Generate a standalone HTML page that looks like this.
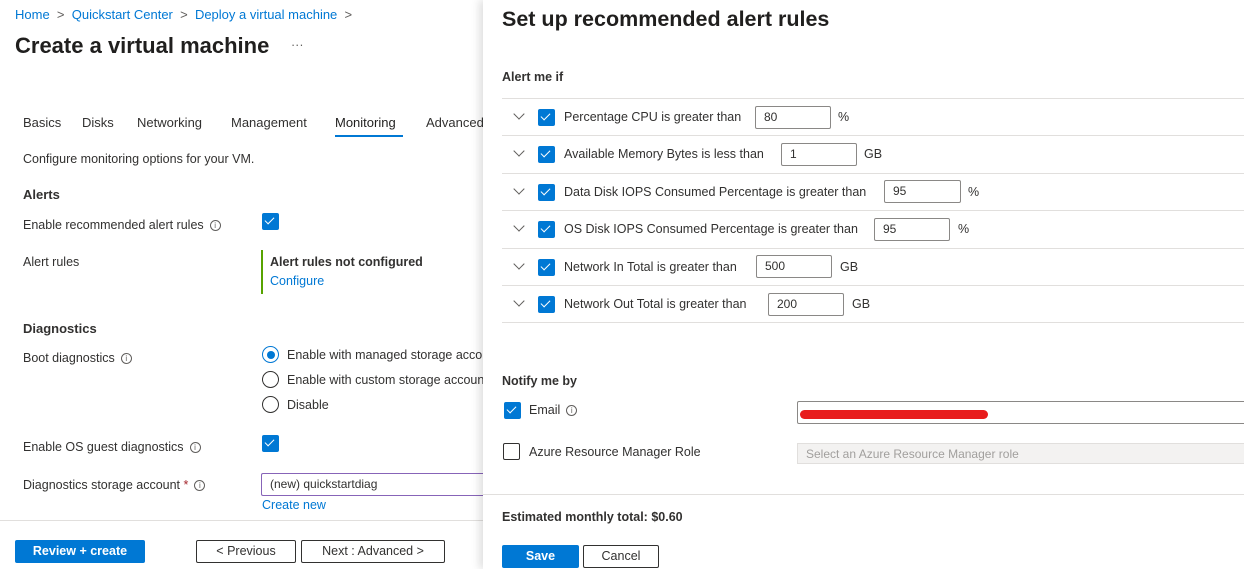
<!DOCTYPE html>
<html><head><meta charset="utf-8"><style>
*{box-sizing:border-box;margin:0;padding:0}
body{width:1244px;height:569px;overflow:hidden;background:#fff;font-family:"Liberation Sans",sans-serif;font-size:12.5px;color:#323130;position:relative}
.a{position:absolute;white-space:nowrap}
.lk{color:#0078d4}
.cb{position:absolute;width:17px;height:17px;background:#0078d4;border-radius:2px}
.cb:after{content:"";position:absolute;left:5px;top:2px;width:4px;height:8px;border:solid #fff;border-width:0 1.3px 1.3px 0;transform:rotate(45deg)}
.info{display:inline-block;width:11px;height:11px;border:1px solid #605e5c;border-radius:50%;font-size:8px;line-height:9px;text-align:center;color:#605e5c;vertical-align:middle;margin-left:6px}
.rd{position:absolute;width:17px;height:17px;border:1px solid #323130;border-radius:50%}
.inp{position:absolute;height:23px;border:1px solid #8a8886;border-radius:2px;padding-left:8px;line-height:21px;font-size:12px}
.hr{position:absolute;left:502px;right:0;height:1px;background:#e1dfdd}
.chev{position:absolute;width:8px;height:8px;border:solid #605e5c;border-width:0 1.2px 1.2px 0;transform:rotate(45deg)}
.btn{position:absolute;height:23px;border:1px solid #323130;border-radius:2px;text-align:center;line-height:21px;font-size:12.5px}
</style></head><body>
<div class="a lk" style="left:15px;top:7px;font-size:13px">Home <span style="color:#605e5c">&nbsp;&gt;&nbsp;</span> Quickstart Center <span style="color:#605e5c">&nbsp;&gt;&nbsp;</span> Deploy a virtual machine <span style="color:#605e5c">&nbsp;&gt;</span></div>
<div class="a" style="left:15px;top:33px;font-size:22px;color:#201f1e;font-weight:600">Create a virtual machine</div>
<div class="a" style="left:291px;top:38px;color:#605e5c">···</div>
<div class="a" style="left:23px;top:115px;font-size:13px">Basics</div>
<div class="a" style="left:82px;top:115px;font-size:13px">Disks</div>
<div class="a" style="left:137px;top:115px;font-size:13px">Networking</div>
<div class="a" style="left:231px;top:115px;font-size:13px">Management</div>
<div class="a" style="left:335px;top:115px;font-size:13px;color:#201f1e">Monitoring</div>
<div class="a" style="left:335px;top:135px;width:68px;height:2px;background:#0078d4"></div>
<div class="a" style="left:426px;top:115px;font-size:13px">Advanced</div>
<div class="a" style="left:23px;top:152px">Configure monitoring options for your VM.</div>
<div class="a" style="left:23px;top:187px;font-weight:700;font-size:13px">Alerts</div>
<div class="a" style="left:23px;top:218px">Enable recommended alert rules<span class="info">i</span></div>
<div class="cb" style="left:262px;top:213px"></div>
<div class="a" style="left:23px;top:255px">Alert rules</div>
<div class="a" style="left:261px;top:250px;width:2px;height:44px;background:#57a300"></div>
<div class="a" style="left:270px;top:255px;font-weight:700">Alert rules not configured</div>
<div class="a lk" style="left:270px;top:274px">Configure</div>
<div class="a" style="left:23px;top:321px;font-weight:700;font-size:13px">Diagnostics</div>
<div class="a" style="left:23px;top:351px">Boot diagnostics<span class="info">i</span></div>
<div class="rd" style="left:262px;top:346px;border-color:#0078d4"><div style="position:absolute;left:3.5px;top:3.5px;width:8px;height:8px;border-radius:50%;background:#0078d4"></div></div>
<div class="a" style="left:287px;top:348px">Enable with managed storage accou</div>
<div class="rd" style="left:262px;top:371px"></div>
<div class="a" style="left:287px;top:373px">Enable with custom storage account</div>
<div class="rd" style="left:262px;top:396px"></div>
<div class="a" style="left:287px;top:398px">Disable</div>
<div class="a" style="left:23px;top:440px">Enable OS guest diagnostics<span class="info">i</span></div>
<div class="cb" style="left:262px;top:435px"></div>
<div class="a" style="left:23px;top:478px">Diagnostics storage account <span style="color:#a4262c">*</span><span class="info">i</span></div>
<div class="inp" style="left:261px;top:473px;width:230px;border-color:#8764b8;border-right:none">(new) quickstartdiag</div>
<div class="a lk" style="left:262px;top:498px">Create new</div>
<div class="a" style="left:0;top:520px;width:483px;height:1px;background:#e1dfdd"></div>
<div class="a" style="left:15px;top:540px;width:130px;height:23px;background:#0078d4;color:#fff;font-weight:700;text-align:center;line-height:23px;border-radius:2px">Review + create</div>
<div class="btn" style="left:196px;top:540px;width:100px">&lt; Previous</div>
<div class="btn" style="left:301px;top:540px;width:144px">Next : Advanced &gt;</div>

<div class="a" style="left:483px;top:0;width:761px;height:569px;background:#fff;box-shadow:-4px 0 8px rgba(0,0,0,.12)"></div>
<div class="a" style="left:502px;top:7px;font-size:21.5px;font-weight:600;color:#201f1e">Set up recommended alert rules</div>
<div class="a" style="left:502px;top:70px;font-weight:700">Alert me if</div>
<div class="hr" style="top:98px"></div>
<div class="hr" style="top:135px"></div>
<div class="hr" style="top:173px"></div>
<div class="hr" style="top:210px"></div>
<div class="hr" style="top:248px"></div>
<div class="hr" style="top:285px"></div>
<div class="hr" style="top:322px"></div>

<div class="chev" style="left:515px;top:110px"></div><div class="cb" style="left:538px;top:109px"></div>
<div class="a" style="left:564px;top:110px">Percentage CPU is greater than</div>
<div class="inp" style="left:755px;top:106px;width:76px">80</div><div class="a" style="left:838px;top:110px">%</div>

<div class="chev" style="left:515px;top:147px"></div><div class="cb" style="left:538px;top:146px"></div>
<div class="a" style="left:564px;top:147px">Available Memory Bytes is less than</div>
<div class="inp" style="left:781px;top:143px;width:76px">1</div><div class="a" style="left:864px;top:147px">GB</div>

<div class="chev" style="left:515px;top:185px"></div><div class="cb" style="left:538px;top:184px"></div>
<div class="a" style="left:564px;top:185px">Data Disk IOPS Consumed Percentage is greater than</div>
<div class="inp" style="left:884px;top:180px;width:77px">95</div><div class="a" style="left:968px;top:185px">%</div>

<div class="chev" style="left:515px;top:222px"></div><div class="cb" style="left:538px;top:221px"></div>
<div class="a" style="left:564px;top:222px">OS Disk IOPS Consumed Percentage is greater than</div>
<div class="inp" style="left:874px;top:218px;width:76px">95</div><div class="a" style="left:958px;top:222px">%</div>

<div class="chev" style="left:515px;top:260px"></div><div class="cb" style="left:538px;top:259px"></div>
<div class="a" style="left:564px;top:260px">Network In Total is greater than</div>
<div class="inp" style="left:756px;top:255px;width:76px">500</div><div class="a" style="left:840px;top:260px">GB</div>

<div class="chev" style="left:515px;top:297px"></div><div class="cb" style="left:538px;top:296px"></div>
<div class="a" style="left:564px;top:297px">Network Out Total is greater than</div>
<div class="inp" style="left:768px;top:293px;width:76px">200</div><div class="a" style="left:852px;top:297px">GB</div>

<div class="a" style="left:502px;top:374px;font-weight:700">Notify me by</div>
<div class="cb" style="left:504px;top:402px"></div>
<div class="a" style="left:529px;top:403px">Email<span class="info">i</span></div>
<div class="inp" style="left:797px;top:401px;width:460px;height:23px"></div>
<div class="a" style="left:800px;top:410px;width:188px;height:9px;background:#e81c1c;border-radius:5px"></div>
<div class="a" style="left:503px;top:443px;width:17px;height:17px;border:1px solid #323130;border-radius:2px"></div>
<div class="a" style="left:529px;top:445px">Azure Resource Manager Role</div>
<div class="a" style="left:797px;top:443px;width:460px;height:21px;background:#f3f2f1;border:1px solid #e1dfdd;color:#a19f9d;padding-left:8px;line-height:21px;font-size:12px">Select an Azure Resource Manager role</div>
<div class="a" style="left:483px;top:494px;width:761px;height:1px;background:#e1dfdd"></div>
<div class="a" style="left:502px;top:510px;font-weight:700;font-size:12.5px">Estimated monthly total: $0.60</div>
<div class="a" style="left:502px;top:545px;width:77px;height:23px;background:#0078d4;color:#fff;font-weight:700;text-align:center;line-height:23px;border-radius:2px">Save</div>
<div class="btn" style="left:583px;top:545px;width:76px">Cancel</div>
</body></html>
